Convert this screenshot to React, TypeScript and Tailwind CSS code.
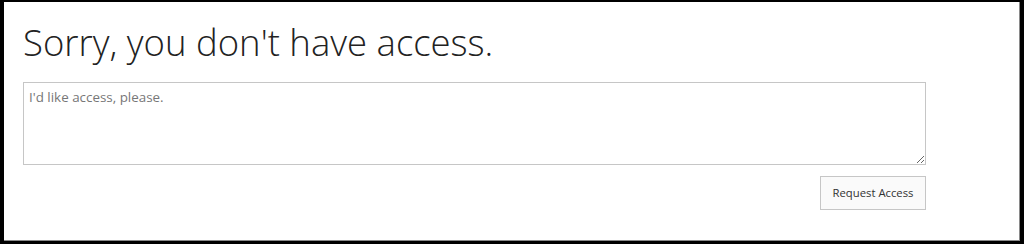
export default function App() {
  return (
    <div className="h-[244px] w-[1024px] overflow-hidden bg-black pb-[3px] pl-[4px] pr-[4px] pt-[2px]">
      <div
        className="flex h-full flex-col border-b border-r border-[#8a8a8a] bg-white pl-[19px] pr-[93px] pt-[16px]"
        style={{ fontFamily: '"Open Sans", "Noto Sans", sans-serif' }}
      >
        <h1 className="text-[36.5px] font-light leading-[48px] text-[#222]">Sorry, you don't have access.</h1>
        <textarea
          placeholder="I'd like access, please."
          className="mt-[16px] h-[83px] w-full resize-y border border-[#c6c6c6] px-[5px] py-[4px] text-[13.4px] text-[#333] outline-none placeholder:text-[#777]"
        />
        <div className="mt-[11px] flex justify-end">
          <button className="h-[34px] w-[106px] border border-[#c6c6c6] bg-[#fafafa] text-[11.3px] text-[#333]">
            Request Access
          </button>
        </div>
      </div>
    </div>
  )
}
